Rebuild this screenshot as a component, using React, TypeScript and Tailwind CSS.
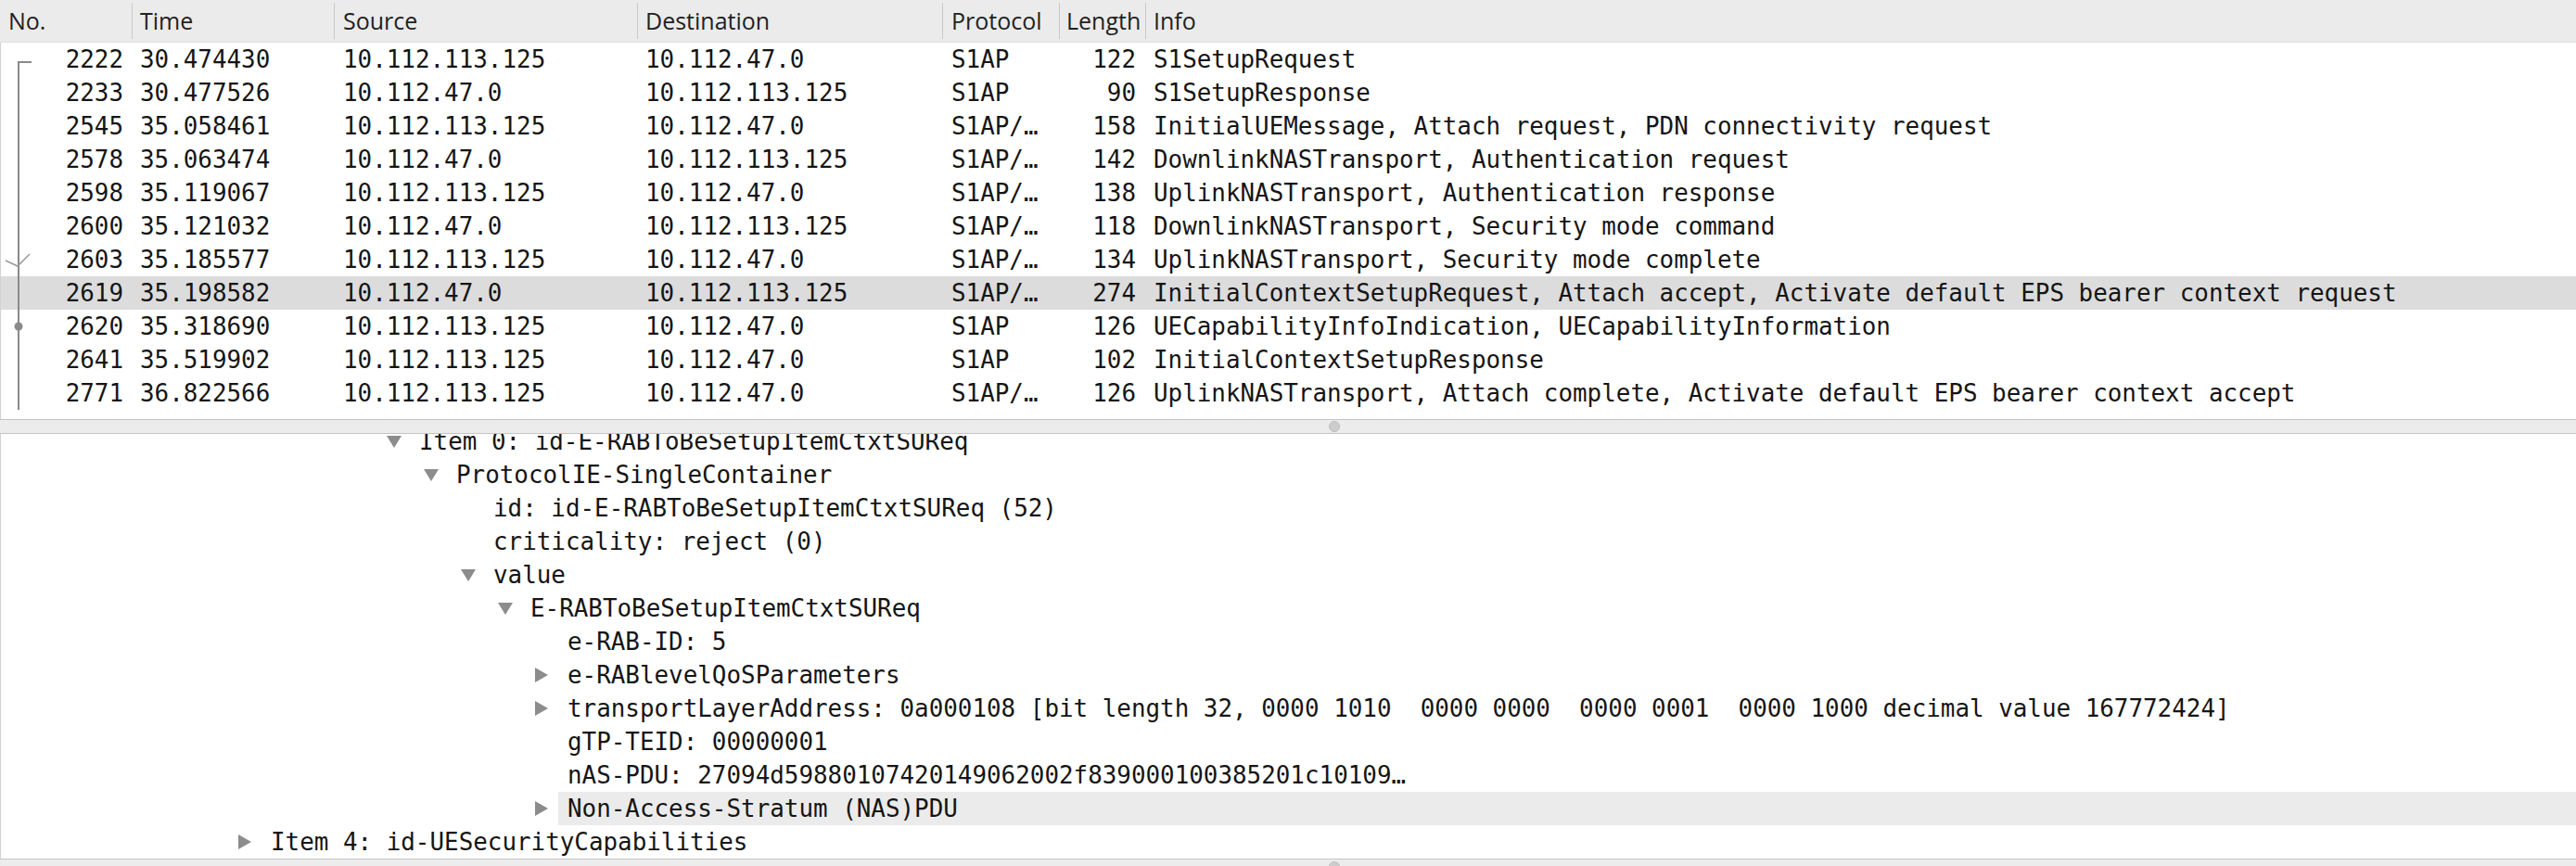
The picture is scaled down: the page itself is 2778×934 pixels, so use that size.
import React from 'react';

const mono = { fontFamily: '"DejaVu Sans Mono", "Liberation Mono", monospace' };

type Pkt = { no: string; time: string; src: string; dst: string; proto: string; len: string; info: string };

const packets: Pkt[] = [
  { no: '2222', time: '30.474430', src: '10.112.113.125', dst: '10.112.47.0', proto: 'S1AP', len: '122', info: 'S1SetupRequest' },
  { no: '2233', time: '30.477526', src: '10.112.47.0', dst: '10.112.113.125', proto: 'S1AP', len: '90', info: 'S1SetupResponse' },
  { no: '2545', time: '35.058461', src: '10.112.113.125', dst: '10.112.47.0', proto: 'S1AP/…', len: '158', info: 'InitialUEMessage, Attach request, PDN connectivity request' },
  { no: '2578', time: '35.063474', src: '10.112.47.0', dst: '10.112.113.125', proto: 'S1AP/…', len: '142', info: 'DownlinkNASTransport, Authentication request' },
  { no: '2598', time: '35.119067', src: '10.112.113.125', dst: '10.112.47.0', proto: 'S1AP/…', len: '138', info: 'UplinkNASTransport, Authentication response' },
  { no: '2600', time: '35.121032', src: '10.112.47.0', dst: '10.112.113.125', proto: 'S1AP/…', len: '118', info: 'DownlinkNASTransport, Security mode command' },
  { no: '2603', time: '35.185577', src: '10.112.113.125', dst: '10.112.47.0', proto: 'S1AP/…', len: '134', info: 'UplinkNASTransport, Security mode complete' },
  { no: '2619', time: '35.198582', src: '10.112.47.0', dst: '10.112.113.125', proto: 'S1AP/…', len: '274', info: 'InitialContextSetupRequest, Attach accept, Activate default EPS bearer context request' },
  { no: '2620', time: '35.318690', src: '10.112.113.125', dst: '10.112.47.0', proto: 'S1AP', len: '126', info: 'UECapabilityInfoIndication, UECapabilityInformation' },
  { no: '2641', time: '35.519902', src: '10.112.113.125', dst: '10.112.47.0', proto: 'S1AP', len: '102', info: 'InitialContextSetupResponse' },
  { no: '2771', time: '36.822566', src: '10.112.113.125', dst: '10.112.47.0', proto: 'S1AP/…', len: '126', info: 'UplinkNASTransport, Attach complete, Activate default EPS bearer context accept' },
];

type Node = { depth: number; toggle: 'down' | 'right' | null; text: string; hl?: boolean };

const tree: Node[] = [
  { depth: 4, toggle: 'down', text: 'Item 0: id-E-RABToBeSetupItemCtxtSUReq' },
  { depth: 5, toggle: 'down', text: 'ProtocolIE-SingleContainer' },
  { depth: 6, toggle: null, text: 'id: id-E-RABToBeSetupItemCtxtSUReq (52)' },
  { depth: 6, toggle: null, text: 'criticality: reject (0)' },
  { depth: 6, toggle: 'down', text: 'value' },
  { depth: 7, toggle: 'down', text: 'E-RABToBeSetupItemCtxtSUReq' },
  { depth: 8, toggle: null, text: 'e-RAB-ID: 5' },
  { depth: 8, toggle: 'right', text: 'e-RABlevelQoSParameters' },
  { depth: 8, toggle: 'right', text: 'transportLayerAddress: 0a000108 [bit length 32, 0000 1010  0000 0000  0000 0001  0000 1000 decimal value 167772424]' },
  { depth: 8, toggle: null, text: 'gTP-TEID: 00000001' },
  { depth: 8, toggle: null, text: 'nAS-PDU: 27094d59880107420149062002f839000100385201c10109…' },
  { depth: 8, toggle: 'right', text: 'Non-Access-Stratum (NAS)PDU', hl: true },
  { depth: 0, toggle: 'right', text: 'Item 4: id-UESecurityCapabilities' },
];

function RelatedMark({ i }: { i: number }) {
  // conversation bracket drawn down the No. column
  return (
    <svg className="absolute left-0 top-0" width="40" height="36" viewBox="0 0 40 36">
      {i === 0 ? (
        <path d="M19 21 V36 M18 21 H33" stroke="#8a8a8a" strokeWidth="2" fill="none" />
      ) : (
        <path d="M19 0 V36" stroke="#8a8a8a" strokeWidth="2" fill="none" />
      )}
      {i === 6 && <polyline points="5,19 18,25 31,12" stroke="#9a9a9a" strokeWidth="1.5" fill="none" />}
      {i === 8 && <circle cx="19" cy="18" r="4.5" fill="#8a8a8a" />}
    </svg>
  );
}

function Toggle({ dir }: { dir: 'down' | 'right' | null }) {
  if (dir === 'down')
    return (
      <svg width="16" height="13" viewBox="0 0 16 13" className="ml-[1px]">
        <path d="M0 0 H16 L8 13 Z" fill="#8c8c8c" />
      </svg>
    );
  if (dir === 'right')
    return (
      <svg width="14" height="16" viewBox="0 0 14 16" className="ml-[1px]">
        <path d="M0 0 L14 8 L0 16 Z" fill="#8c8c8c" />
      </svg>
    );
  return null;
}

export default function App() {
  return (
    <div className="w-[2778px] h-[934px] overflow-hidden bg-white flex flex-col text-[#151515]">
      {/* packet list */}
      <div className="h-[452px] overflow-hidden flex flex-col">
        <div
          className="h-[46px] shrink-0 bg-[#ebebeb] border-b border-[#e0e0e0] flex items-stretch py-[3px] text-[25px] text-[#222]"
          style={{ fontFamily: '"Open Sans", "Liberation Sans", sans-serif' }}
        >
          <div className="w-[142px] pl-[9px] flex items-center">No.</div>
          <div className="w-[218px] pl-[8px] border-l border-[#c9c9c9] flex items-center">Time</div>
          <div className="w-[327px] pl-[9px] border-l border-[#c9c9c9] flex items-center">Source</div>
          <div className="w-[329px] pl-[8px] border-l border-[#c9c9c9] flex items-center">Destination</div>
          <div className="w-[126px] pl-[9px] border-l border-[#c9c9c9] flex items-center overflow-hidden whitespace-nowrap">Protocol</div>
          <div className="w-[93px] pl-[7px] border-l border-[#c9c9c9] flex items-center overflow-hidden whitespace-nowrap">Length</div>
          <div className="flex-1 pl-[8px] border-l border-[#c9c9c9] flex items-center">Info</div>
        </div>
        <div className="flex-1 border-l border-[#d2d2d2] text-[25.9px]" style={mono}>
          {packets.map((p, i) => (
            <div
              key={p.no}
              className={`h-9 flex items-center whitespace-pre ${i === 7 ? 'bg-[#dcdcdc]' : ''}`}
            >
              <div className="relative w-[141px] h-9 flex items-center justify-end pr-[9px]">
                <RelatedMark i={i} />
                <span>{p.no}</span>
              </div>
              <div className="w-[218px] pl-[9px]">{p.time}</div>
              <div className="w-[327px] pl-[10px]">{p.src}</div>
              <div className="w-[329px] pl-[9px]">{p.dst}</div>
              <div className="w-[126px] pl-[10px]">{p.proto}</div>
              <div className="w-[93px] pr-[10px] text-right">{p.len}</div>
              <div className="flex-1 pl-[9px]">{p.info}</div>
            </div>
          ))}
        </div>
      </div>

      {/* splitter */}
      <div className="h-[16px] shrink-0 bg-[#ececec] border-y border-[#c4c4c4] flex items-center pl-[1433px]">
        <div className="w-[12px] h-[12px] rounded-full bg-[#cdcdcd] border border-[#bdbdbd]" />
      </div>

      {/* packet details */}
      <div className="h-[458px] shrink-0 overflow-hidden border-l border-[#d2d2d2] text-[25.9px]" style={mono}>
        <div className="-mt-[10px]">
          {tree.map((n, i) => (
            <div key={i} className="h-9 flex items-stretch whitespace-pre">
              <div className="shrink-0" style={{ width: 255 + n.depth * 40 }} />
              <div className="w-[36px] shrink-0 flex items-center">
                <Toggle dir={n.toggle} />
              </div>
              <div className={`flex-1 flex items-center -ml-[10px] pl-[10px] ${n.hl ? 'bg-[#ebebeb]' : ''}`}>
                {n.text}
              </div>
            </div>
          ))}
        </div>
      </div>

      {/* bottom splitter edge */}
      <div className="h-[8px] shrink-0 bg-[#ececec] border-t border-[#c4c4c4] overflow-hidden pl-[1433px] pt-[2px]">
        <div className="w-[12px] h-[12px] rounded-full bg-[#cdcdcd] border border-[#bdbdbd]" />
      </div>
    </div>
  );
}
